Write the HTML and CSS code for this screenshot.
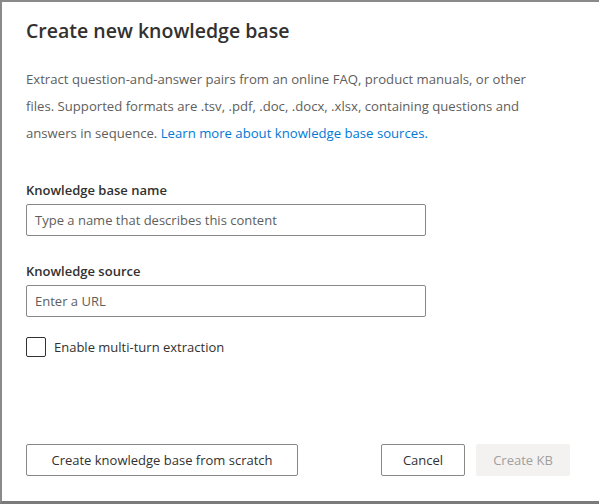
FILE: index.html
```html
<!DOCTYPE html>
<html lang="en">
<head>
<meta charset="utf-8">
<title>Create new knowledge base</title>
<link rel="stylesheet" href="styles.css">
</head>
<body>
<div class="dialog">
  <h1 class="title">Create new knowledge base</h1>
  <p class="desc">Extract question-and-answer pairs from an online FAQ, product manuals, or other<br>files. Supported formats are .tsv, .pdf, .doc, .docx, .xlsx, containing questions and<br>answers in sequence. <a class="link" href="#">Learn more about knowledge base sources.</a></p>

  <div class="field first">
    <label class="label">Knowledge base name</label>
    <div class="input"><span class="placeholder">Type a name that describes this content</span></div>
  </div>

  <div class="field second">
    <label class="label">Knowledge source</label>
    <div class="input"><span class="placeholder">Enter a URL</span></div>
  </div>

  <div class="check-row">
    <span class="checkbox"></span>
    <span class="check-label">Enable multi-turn extraction</span>
  </div>

  <div class="spacer"></div>

  <div class="footer">
    <button class="btn scratch">Create knowledge base from scratch</button>
    <div class="right">
      <button class="btn cancel">Cancel</button>
      <button class="btn disabled">Create KB</button>
    </div>
  </div>
</div>
</body>
</html>
```
FILE: styles.css
```css
html, body {
  margin: 0;
  padding: 0;
}
body {
  width: 599px;
  height: 504px;
  box-sizing: border-box;
  border-top: 2px solid #8a8a8a;
  border-left: 2px solid #8a8a8a;
  border-bottom: 3px solid #7a7a7a;
  background: #ffffff;
  font-family: "Open Sans", "Noto Sans", sans-serif;
  color: #323130;
  overflow: hidden;
}
.dialog {
  height: 100%;
  box-sizing: border-box;
  padding: 0 29px 0 24px;
  display: flex;
  flex-direction: column;
}
.title {
  margin: 16px 0 0 0;
  font-size: 19.5px;
  font-weight: 600;
  line-height: 26px;
  color: #323130;
}
.desc {
  margin: 22px 0 0 0;
  font-size: 13.15px;
  line-height: 27px;
  color: #605e5c;
  white-space: nowrap;
}
.link {
  color: #0078d4;
  text-decoration: none;
}
.field {
  display: flex;
  flex-direction: column;
}
.field.first {
  margin-top: 33px;
}
.field.second {
  margin-top: 25px;
}
.label {
  font-size: 13px;
  font-weight: 600;
  line-height: 20px;
  color: #323130;
  margin-bottom: 4px;
}
.input {
  width: 400px;
  height: 32px;
  box-sizing: border-box;
  border: 1px solid #8a8886;
  border-radius: 2px;
  padding: 0 8px;
  display: flex;
  align-items: center;
}
.placeholder {
  font-size: 13px;
  color: #605e5c;
}
.check-row {
  display: flex;
  align-items: center;
  margin-top: 20px;
}
.checkbox {
  width: 20px;
  height: 20px;
  box-sizing: border-box;
  border: 1px solid #323130;
  border-radius: 2px;
}
.check-label {
  margin-left: 8px;
  font-size: 13px;
  color: #323130;
}
.spacer {
  flex: 1;
}
.footer {
  display: flex;
  justify-content: space-between;
  align-items: center;
  margin-bottom: 25px;
}
.right {
  display: flex;
  gap: 11px;
}
.btn {
  height: 32px;
  box-sizing: border-box;
  border: 1px solid #8a8886;
  border-radius: 2px;
  background: #ffffff;
  font-family: inherit;
  font-size: 13px;
  color: #323130;
  padding: 0;
  white-space: nowrap;
}
.btn.scratch {
  width: 272px;
}
.btn.cancel {
  width: 84px;
}
.btn.disabled {
  width: 94px;
  border-color: #f3f2f1;
  background: #f3f2f1;
  color: #a19f9d;
}
```
